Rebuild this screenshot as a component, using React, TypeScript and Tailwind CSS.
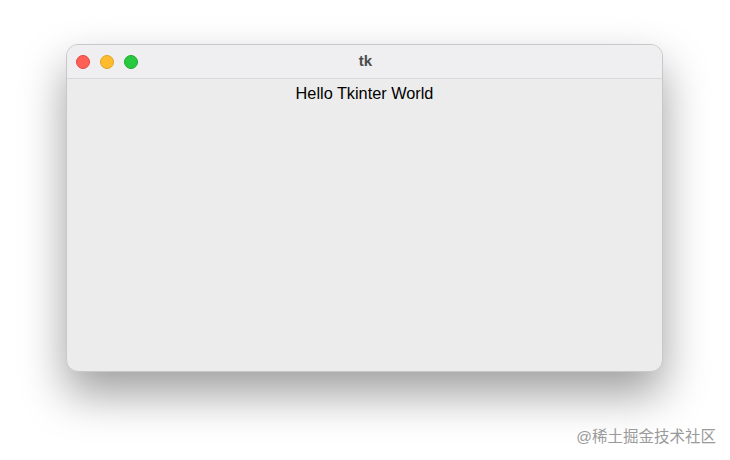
export default function App() {
  return (
    <div className="w-[730px] h-[460px] bg-white overflow-hidden flex flex-col" style={{ fontFamily: '"Liberation Sans", Arial, sans-serif' }}>
      <div className="pl-[66px] pt-[44px]">
        <div className="w-[597px] h-[328px] rounded-[12px] bg-[#ececec] border border-[#c8c8c8] shadow-[0_22px_45px_rgba(0,0,0,0.38)] overflow-hidden flex flex-col">
          <div className="h-[34px] bg-[#efeef0] border-b border-[#d8d8d8] flex items-center relative">
            <div className="flex items-center gap-[10px] pl-[9px]">
              <span className="w-[14px] h-[14px] rounded-full bg-[#fe5f57] border border-[#e2463f]" />
              <span className="w-[14px] h-[14px] rounded-full bg-[#febc2e] border border-[#dea123]" />
              <span className="w-[14px] h-[14px] rounded-full bg-[#28c840] border border-[#1aab29]" />
            </div>
            <div className="absolute inset-0 flex items-center justify-center pl-[2px] text-[15px] font-bold text-[#4d4d4d]">tk</div>
          </div>
          <div className="flex justify-center pt-[3px] text-[16.3px] text-black leading-[22px]">Hello Tkinter World</div>
        </div>
      </div>
      <div className="flex justify-end pr-[14px] mt-auto mb-[12px] text-[15.5px] text-[#9a9a9a]" style={{ fontFamily: '"Liberation Sans", "Noto Sans CJK SC", sans-serif' }}>
        @稀土掘金技术社区
      </div>
    </div>
  );
}
